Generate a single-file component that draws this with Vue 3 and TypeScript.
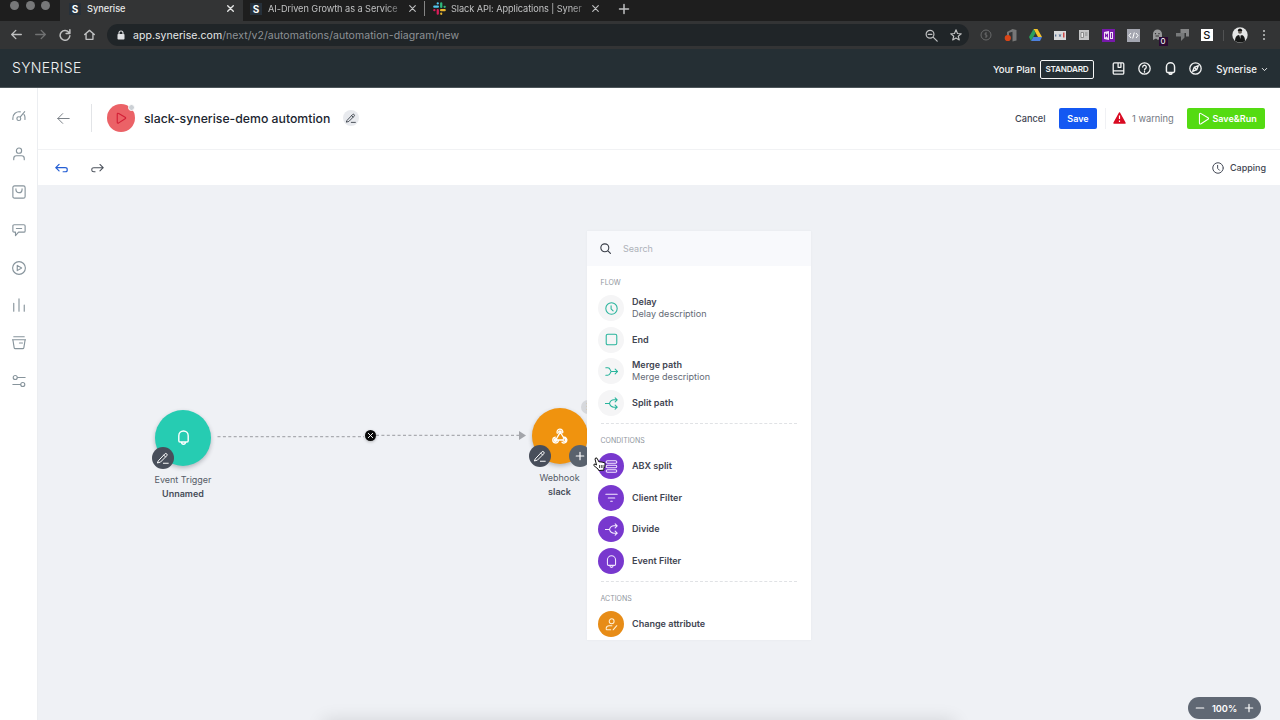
<script setup lang="ts">
import { h } from 'vue'

const paths: Record<string, string> = {
  back: 'M15 8H1M7 2L1 8l6 6',
  forward: 'M1 8h14M9 2l6 6-6 6',
  reload: 'M13.5 5A6.5 6.5 0 1 0 14.5 9M14.5 1v5h-5',
  home: 'M1 8l7-6 7 6M3 7v8h10V7',
  zoomOut: 'M11 6.5a4.8 4.8 0 1 1-9.6 0a4.8 4.8 0 1 1 9.6 0M10 10l5 5M4 6.5h4.5',
  star: 'M8 1l2 5 5 .4-4 3.3 1.4 5L8 12l-4.4 2.7 1.4-5-4-3.3L6 6z',
  search: 'M12.800 7a5.800 5.800 0 1 1-11.600 0a5.800 5.800 0 1 1 11.600 0M11.200 11.200l4 4',
  book: 'M3 1h10q1.500 0 1.500 1.500v11q0 1.500-1.500 1.500H3q-1.500 0-1.500-1.500v-11Q1.500 1 3 1M1.500 11h13M7.500 1v5.500H11V1',
  help: 'M15 8A7 7 0 1 1 1 8A7 7 0 1 1 15 8M5.8 6.2a2.2 2.2 0 1 1 3.4 1.9Q8 8.8 8 9.8M8 11.5v1',
  bell: 'M3 11.500V6a5 5 0 0 1 10 0v5.500q0 1.300-1.300 1.300H4.300Q3 12.800 3 11.500M6 13a2 2.200 0 0 0 4 0',
  compass: 'M15 8A7 7 0 1 1 1 8A7 7 0 1 1 15 8M11.5 4.5L9.5 9.5l-5 2 2-5zM6.5 6.5l3 3',
  chevron: 'M3 5.5l5 5 5-5',
  gauge: 'M1 12V10.5A7 7 0 0 1 9.5 3.3M14.8 12V9.5q0-2-1-3.2M10 11a2.2 2.2 0 1 1-4.4 0a2.2 2.2 0 1 1 4.4 0M9.3 9.3L14.5 3',
  user: 'M11 4.200a3 3 0 1 1-6 0a3 3 0 1 1 6 0M2 14.500V13q0-3 3-3h6q3 0 3 3v1.500',
  bag: 'M3 1h10q2 0 2 2v10q0 2-2 2H3q-2 0-2-2V3q0-2 2-2M4.5 4.5v.8a3.5 3.5 0 0 0 7 0v-.8',
  chat: 'M2.5 2h11q1.5 0 1.5 1.5V9q0 1.5-1.5 1.5H7.5L4 14.5v-4H2.5Q1 10.500 1 9V3.500Q1 2 2.500 2M5 6.300h6',
  playCircle: 'M15.300 8A7.300 7.300 0 1 1 .7 8A7.300 7.300 0 1 1 15.300 8M6 5l5 3-5 3z',
  bars: 'M2 6v9M8 1v14M14 8v7',
  basket: 'M2 .8h12M.5 4.300h15M1 4.300l1.500 9.200q.2 1 1.200 1h8.600q1 0 1.200-1L15 4.300M8.500 8H12',
  sliders: 'M6 4a2.300 2.300 0 1 1-4.600 0a2.300 2.300 0 1 1 4.600 0M6 4h9M14.600 12a2.300 2.300 0 1 1-4.600 0a2.300 2.300 0 1 1 4.600 0M10 12H1',
  pencil: 'M2 11.500L10.500 2.500q1.300-1.200 2.500 0t0 2.500L4.600 13.500 1 14.500zM9 4.200l2.300 2.300M8.500 15H15',
  undo: 'M5 3L1 7l4 4M1 7h11.500q2.500 0 2.500 2v1q0 2-2.500 2H10',
  redo: 'M11 3l4 4-4 4M15 7H3.500Q1 7 1 9v1q0 2 2.500 2H5',
  clock: 'M15 8A7 7 0 1 1 1 8A7 7 0 1 1 15 8M7.500 4.500v4L10 11',
  play: 'M3 3q0-2 2-1l8.500 5q1.500 1 0 2L5 14.500q-2 1-2-1z',
  square: 'M3.500 1.500h9q2 0 2 2v9q0 2-2 2h-9q-2 0-2-2v-9q0-2 2-2',
  merge: 'M1 3.500h2.500q2 0 3 2.500t2 2h7M1 12.500h2.500q2 0 3-2.500t2-2M12.500 5l3 3-3 3',
  split: 'M.5 8H5.500M15 3.500h-4Q7 3.500 5.500 8q1.500 4.500 5.500 4.500h4M12.500 1L15 3.500 12.500 6M12.500 10l2.500 2.500-2.500 2.500',
  abx: 'M3 1h10q1.500 0 1.500 1.500T13 4H3Q1.500 4 1.500 2.500T3 1M3 6.500h10q1.500 0 1.500 1.500T13 9.500H3Q1.500 9.500 1.500 8T3 6.500M3 12h10q1.500 0 1.500 1.500T13 15H3q-1.500 0-1.500-1.500T3 12',
  filter: 'M1 4h14M4 8.500h8M7 12.500h2',
  attribute: 'M11.200 4a3 3 0 1 1-6 0a3 3 0 1 1 6 0M7 14.500H3q-2 0-1.500-2 .5-3 3.500-3h3.500M10 14.500l4.500-5',
  webhook: 'M7.300 5.800L3.700 12M5.300 5.200a2.900 2.900 0 1 1 5.400-.4M8.200 4l3.600 6M9.300 4.100a1.300 1.300 0 1 1-2.600 0a1.300 1.300 0 1 1 2.600 0M5 12a1.300 1.300 0 1 1-2.600 0a1.300 1.300 0 1 1 2.600 0M5 12h6M13.600 12a1.300 1.300 0 1 1-2.600 0a1.300 1.300 0 1 1 2.600 0M3.300 9.200a2.900 2.900 0 1 0 3.200 3.600M10 14.200a2.900 2.900 0 1 0 1.800-5',
  minus: 'M2 8h12',
  plus: 'M2 8h12M8 2v12',
  close: 'M3 3l10 10M13 3L3 13',
}

const Icon = (props: { name: string; size?: number; weight?: number }) =>
  h(
    'svg',
    {
      class: 'icon',
      viewBox: '0 0 16 16',
      width: props.size ?? 14,
      height: props.size ?? 14,
      fill: 'none',
      stroke: 'currentColor',
      'stroke-width': props.weight ?? 1.3,
      'stroke-linecap': 'round',
      'stroke-linejoin': 'round',
    },
    [h('path', { d: paths[props.name] })],
  )
Icon.props = ['name', 'size', 'weight']

interface Item { label: string; icon: string; note?: string }
interface Section { title: string; tone: string; items: Item[] }

const sections: Section[] = [
  {
    title: 'FLOW',
    tone: 'flow',
    items: [
      { label: 'Delay', icon: 'clock', note: 'Delay description' },
      { label: 'End', icon: 'square' },
      { label: 'Merge path', icon: 'merge', note: 'Merge description' },
      { label: 'Split path', icon: 'split' },
    ],
  },
  {
    title: 'CONDITIONS',
    tone: 'conditions',
    items: [
      { label: 'ABX split', icon: 'abx' },
      { label: 'Client Filter', icon: 'filter' },
      { label: 'Divide', icon: 'split' },
      { label: 'Event Filter', icon: 'bell' },
    ],
  },
  { title: 'ACTIONS', tone: 'actions', items: [{ label: 'Change attribute', icon: 'attribute' }] },
]

const sideIcons = ['gauge', 'user', 'bag', 'chat', 'playCircle', 'bars', 'basket', 'sliders']
</script>

<template>
  <div class="screen">
    <div class="tabs">
      <div class="lights"><i></i><i></i><i></i></div>
      <div class="tab active">
        <span class="fav">S</span><span class="tab-title t1">Synerise</span>
        <Icon name="close" :size="9" :weight="2.4" />
      </div>
      <div class="tab second">
        <span class="fav dark">S</span><span class="tab-title t2 fade">AI-Driven Growth as a Service</span>
        <Icon name="close" :size="9" :weight="2" />
      </div>
      <div class="tab third">
        <svg class="slack" viewBox="0 0 12 12" width="13" height="13" fill="none" stroke-width="2.1" stroke-linecap="round">
          <path d="M1.200 4.300h3.300M4.400 1.200v.1" stroke="#52c5ee" />
          <path d="M7.600 1.200v3.300M10.700 4.400h.1" stroke="#2fb67c" />
          <path d="M7.500 7.600h3.300M7.600 10.800v.1" stroke="#e8b42e" />
          <path d="M4.400 7.500v3.300M1.200 7.600h.1" stroke="#d81c59" />
        </svg>
        <span class="tab-title t3 fade">Slack API: Applications | Syner</span>
        <Icon name="close" :size="9" :weight="2" />
      </div>
      <div class="new-tab"><Icon name="plus" :size="12" :weight="2" /></div>
    </div>

    <div class="toolbar">
      <div class="nav">
        <span><Icon name="back" :size="11" :weight="1.900" /></span>
        <span class="dim"><Icon name="forward" :size="11" :weight="1.900" /></span>
        <span><Icon name="reload" :size="12" :weight="2" /></span>
        <span><Icon name="home" :size="11" :weight="2" /></span>
      </div>
      <div class="url">
        <svg class="lock" viewBox="0 0 8 10" width="8" height="10">
          <rect x="0.500" y="4" width="7" height="5.500" rx="0.800" fill="#dfe1e3" />
          <path d="M2 4.500V3a2 2 0 0 1 4 0v1.500" fill="none" stroke="#dfe1e3" stroke-width="1.100" />
        </svg>
        <span class="address"><b>app.synerise.com</b>/next/v2/automations/automation-diagram/new</span>
        <span class="url-icon"><Icon name="zoomOut" :size="13" :weight="1.500" /></span>
        <span class="url-icon"><Icon name="star" :size="12" :weight="1.500" /></span>
      </div>
      <div class="exts">
        <span>
          <svg width="12" height="12" viewBox="0 0 12 12" fill="none" stroke="#68696a"><circle cx="6" cy="6" r="5" /><path d="M6 3v6M5.200 4v2M6.800 6v2" /></svg>
        </span>
        <span>
          <svg width="14" height="14" viewBox="0 0 14 14"><path d="M3 4l5.500-3L12.500 2v10.500L8.500 13.500V3.800L5 4.800V8H3z" fill="#777" /><circle cx="3.800" cy="10" r="3.100" fill="#da4517" /></svg>
        </span>
        <span>
          <svg width="13" height="12" viewBox="0 0 13 12"><path d="M4.500 0h4L13 8H9z" fill="#f5c32c" /><path d="M4.500 0L0 8l2 4 4.600-8z" fill="#2a9f5b" /><path d="M4.300 8H13l-2 4H2z" fill="#4d80dc" /></svg>
        </span>
        <span>
          <svg width="12" height="9" viewBox="0 0 12 9"><rect width="12" height="9" fill="#d9dadc" /><path d="M9 1.500h1.500v5H9z" fill="#cf4a48" /><path d="M1 3.500h1.300v2H1M4.500 3.500h3l-.8 1 .5 1.500-1.200-.7-1.200.7.500-1.500" fill="#567095" /></svg>
        </span>
        <span>
          <svg width="10" height="10" viewBox="0 0 10 10"><rect width="10" height="10" fill="#c4c5c6" /><path d="M2 2.500h2.500v5H2zM6 3h2.500M6 5h2.500" fill="#ececec" stroke="#77797a" stroke-width=".8" /></svg>
        </span>
        <span>
          <svg width="13" height="13" viewBox="0 0 13 13"><rect width="13" height="13" fill="#7719aa" /><path d="M2 3l5-1v9l-5-1zM8 3h3v7H8" fill="#efe2f5" /><path d="M3.500 8.300V4.700l2 3.600V4.700M9.500 4v5" fill="none" stroke="#7719aa" /></svg>
        </span>
        <span>
          <svg width="13" height="13" viewBox="0 0 13 13"><rect width="13" height="13" fill="#a4a6b0" /><path d="M4 4L2 6.500 4 9M9 4l2 2.500L9 9M7.300 3.500l-1.600 6" fill="none" stroke="#fff" /></svg>
        </span>
        <span class="ghost">
          <svg width="11" height="12" viewBox="0 0 11 12"><path d="M1 11V5a4.500 4.500 0 0 1 9 0v6L8 9.500 6 11 4 9.500z" fill="#98999a" /><path d="M3.500 4v1.200M7 4v1.200M3.500 7h3.500" stroke="#333" stroke-width="1.200" /></svg>
          <em>0</em>
        </span>
        <span>
          <svg width="13" height="12" viewBox="0 0 13 12"><path d="M4.500 0H13v7.500h-3V4H4.500z" fill="#858687" /><path d="M0 4h8.500v4.500L5 12V7.500H0z" fill="#77797a" /></svg>
        </span>
        <span><b class="s-ext">S</b></span>
      </div>
      <i class="bar"></i>
      <svg class="avatar" width="16" height="16" viewBox="0 0 16 16">
        <circle cx="8" cy="8" r="7.700" fill="#e4e5e5" />
        <path d="M3 14q0-5 3.500-6L8 9l2-1q3 1 3 6-4 3-10 0" fill="#151616" />
        <circle cx="8" cy="4.800" r="2" fill="#625b55" /><path d="M5.700 4q0-2.500 2.300-2.500T10.300 4z" fill="#111" /><path d="M7.500 9h1v3" fill="#ddd" />
      </svg>
      <div class="kebab"><i></i><i></i><i></i></div>
    </div>

    <header class="app-header">
      <span class="brand">SYNERISE</span>
      <span class="plan">Your Plan</span>
      <span class="badge">STANDARD</span>
      <div class="head-icons">
        <span><Icon name="book" :size="13" :weight="1.600" /></span>
        <span><Icon name="help" :size="13" :weight="1.600" /></span>
        <span><Icon name="bell" :size="13" :weight="1.800" /></span>
        <span><Icon name="compass" :size="13" :weight="1.600" /></span>
      </div>
      <span class="account">Synerise</span>
      <Icon name="chevron" :size="7" :weight="2.200" />
    </header>

    <div class="body">
      <aside class="side">
        <span v-for="name in sideIcons" :key="name"><Icon :name="name" :size="14" :weight="1.300" /></span>
      </aside>
      <main class="main">
        <div class="title-bar">
          <span class="go-back"><Icon name="back" :size="13" :weight="1.200" /></span>
          <div class="campaign"><Icon name="play" :size="12" :weight="1.500" /><i></i></div>
          <span class="title">slack-synerise-demo automtion</span>
          <span class="rename"><Icon name="pencil" :size="10" :weight="1.400" /></span>
          <span class="cancel">Cancel</span>
          <button class="save"><span>Save</span></button>
          <div class="warn">
            <svg width="13" height="12" viewBox="0 0 13 12"><path d="M6.500 1L12 11H1z" fill="#d90b22" stroke="#d90b22" stroke-width="1.500" stroke-linejoin="round" /><path d="M6.500 3.500V7M6.500 8.600v1.300" stroke="#fff" stroke-width="1.200" /></svg>
            <span>1 warning</span>
          </div>
          <button class="run"><Icon name="play" :size="13" :weight="1.300" /><span>Save&amp;Run</span></button>
        </div>
        <div class="sub-bar">
          <span class="undo"><Icon name="undo" :size="13" :weight="1.500" /></span>
          <span class="redo"><Icon name="redo" :size="13" :weight="1.300" /></span>
          <div class="capping"><Icon name="clock" :size="12" :weight="1.300" /><span>Capping</span></div>
        </div>

        <div class="canvas">
          <svg class="edges" width="600" height="500" viewBox="0 0 600 500" fill="none">
            <path d="M179.500 251.700H326" stroke="#aaacb1" stroke-width="1.300" stroke-dasharray="3 2.400" />
            <path d="M338 250.400H481" stroke="#aaacb1" stroke-width="1.300" stroke-dasharray="3 2.400" />
            <path d="M481 246l7 4.500-7 4.500z" fill="#a3a5aa" />
          </svg>
          <span class="cut"><Icon name="close" :size="7" :weight="2.200" /></span>

          <div class="node trigger">
            <div class="disc"><Icon name="bell" :size="15" :weight="1.500" /></div>
            <span class="chip edit"><Icon name="pencil" :size="12" :weight="1.300" /></span>
            <p>Event Trigger</p>
            <strong>Unnamed</strong>
          </div>
          <div class="node webhook">
            <span class="more">⋮</span>
            <div class="disc"><Icon name="webhook" :size="16" :weight="1.300" /></div>
            <span class="chip edit"><Icon name="pencil" :size="12" :weight="1.300" /></span>
            <span class="chip add"><Icon name="plus" :size="10" :weight="1.900" /></span>
            <p>Webhook</p>
            <strong>slack</strong>
          </div>

          <div class="picker">
            <div class="search"><Icon name="search" :size="11" :weight="1.600" /><span>Search</span></div>
            <section v-for="s in sections" :key="s.title" :class="s.tone">
              <h4>{{ s.title }}</h4>
              <div v-for="item in s.items" :key="item.label" class="item">
                <span class="dot"><Icon :name="item.icon" :size="13" :weight="1.300" /></span>
                <div class="label"><b>{{ item.label }}</b><small v-if="item.note">{{ item.note }}</small></div>
              </div>
            </section>
          </div>

          <svg class="cursor" width="13" height="14" viewBox="0 0 13 14">
            <path d="M3.500 8L2 2Q2.500.2 4 1.200L6 5l1-.4 1 .6 1-.4 1 .8 1.300-.2.800 1.500-.4 3-.9 1.500.2 1.700-5.200.5L5 12 .8 8.500Q.5 7 2 7z" fill="#fff" stroke="#111" stroke-width="1" />
            <path d="M6.500 8v3M8.300 8v3M10 8v3" stroke="#222" stroke-width=".8" />
          </svg>

          <div class="dock-shade"></div>
          <div class="zoom"><Icon name="minus" :size="10" :weight="1.900" /><span>100%</span><Icon name="plus" :size="10" :weight="1.900" /></div>
        </div>
      </main>
    </div>
  </div>
</template>

<style>
body { margin: 0; overflow: hidden; }
</style>

<style scoped>
* { box-sizing: border-box; }
.screen { width: 1280px; height: 720px; display: flex; flex-direction: column; overflow: hidden; background: #fff; font-family: Inter, "Liberation Sans", sans-serif; color: #3f4552; font-size: 10px; white-space: nowrap; }
.icon { display: block; flex: none; }
button { border: 0; padding: 0; font: inherit; }

.tabs { height: 21px; background: #1e1e1e; display: flex; flex: none; color: #c0c1c2; }
.lights { width: 60px; display: flex; gap: 6.500px; padding: 1px 0 0 10px; }
.lights i { width: 9px; height: 9px; border-radius: 50%; background: #777879; flex: none; }
.tab { display: flex; align-items: center; height: 21px; padding-bottom: 4px; }
.active { width: 183px; background: #333435; padding-left: 9px; color: #e6e7e7; }
.second { width: 183px; padding-left: 7px; }
.second::after { content: ""; width: 1px; height: 15px; background: #858585; margin-left: 7px; }
.third { width: 186px; padding-left: 7px; }
.fav { width: 12px; height: 12px; background: #26303a; color: #fff; font-size: 10px; font-weight: 700; line-height: 12px; text-align: center; flex: none; }
.tab-title { font-size: 9.200px; margin-left: 6px; line-height: 14px; flex: none; }
.t1 { width: 138.500px; color: #e8e9e9; font-weight: 500; }
.t2 { width: 133px; letter-spacing: -.05px; }
.t3 { width: 136px; margin-left: 5px; letter-spacing: -.08px; }
.tab .icon { margin-left: 7px; }
.active .icon { margin-left: 0; }
.third .icon { margin-left: 4px; }
.fade { -webkit-mask-image: linear-gradient(90deg, #000 88%, rgba(0, 0, 0, .3)); mask-image: linear-gradient(90deg, #000 88%, rgba(0, 0, 0, .3)); }
.new-tab { padding: 3px 0 0 6px; }

.toolbar { height: 28px; background: #333435; display: flex; align-items: center; flex: none; color: #bfc0c1; }
.nav { display: flex; width: 107px; padding-left: 4px; }
.nav span { width: 24.500px; display: flex; justify-content: center; }
.nav .dim { color: #717273; }
.url { width: 862px; height: 22px; border-radius: 11px; background: #202528; display: flex; align-items: center; padding: 0 1px 0 10px; }
.address { font-size: 10.500px; margin-left: 8px; flex: 1; color: #8e9296; letter-spacing: .05px; }
.address b { font-weight: 400; color: #e8eaea; }
.url-icon { width: 24.500px; display: flex; justify-content: center; }
.exts { display: flex; width: 245px; margin-left: 5px; }
.exts span { width: 24.500px; height: 16px; display: flex; align-items: center; justify-content: center; }
.exts .ghost { position: relative; }
.ghost em { position: absolute; left: 13px; top: 10px; width: 9px; height: 9px; background: #2b0a33; color: #fff; font: 8px/9px Inter, sans-serif; text-align: center; }
.s-ext { width: 12px; height: 12px; background: #fff; color: #111; font-size: 11px; line-height: 12px; font-weight: 500; text-align: center; }
.bar { width: 1px; height: 11px; background: #515253; margin: 0 8px 0 4px; }
.kebab { display: flex; flex-direction: column; gap: 2px; margin-left: 15px; }
.kebab i { width: 2px; height: 2px; border-radius: 50%; background: #c5c6c6; }

.app-header { height: 39px; background: #252f34; border-bottom: 1px solid #4d565a; display: flex; align-items: center; flex: none; color: #f2f3f3; padding: 2px 13px 0 12px; }
.brand { font-size: 14px; font-weight: 300; letter-spacing: .35px; width: 981px; line-height: 14px; margin-top: -2px; flex: none; }
.plan { width: 47px; font-size: 9.600px; font-weight: 500; flex: none; letter-spacing: -.1px; }
.badge { width: 54px; height: 19px; border: 1.500px solid #f4f5f5; border-radius: 2px; font-size: 8.200px; font-weight: 600; text-align: center; line-height: 16.500px; flex: none; letter-spacing: -.25px; }
.head-icons { display: flex; margin-left: 12px; margin-top: -2px; }
.head-icons span { width: 25.700px; display: flex; justify-content: center; }
.account { font-size: 9.700px; font-weight: 500; margin-left: 7.500px; width: 45px; flex: none; padding-top: 1px; }

.body { flex: 1; display: flex; min-height: 0; }
.side { width: 38px; border-right: 1px solid #eceef1; display: flex; flex-direction: column; padding-top: 9.500px; color: #87949c; flex: none; }
.side span { height: 37.800px; display: flex; align-items: center; justify-content: center; flex: none; }
.main { flex: 1; display: flex; flex-direction: column; min-width: 0; }
.title-bar { height: 62px; border-bottom: 1px solid #f1f2f4; display: flex; align-items: center; padding: 0 15px 1px 0; flex: none; }
.go-back { width: 54px; height: 28px; border-right: 1px solid #e2e4e7; display: flex; align-items: center; padding-left: 19px; color: #777d85; }
.campaign { width: 28px; height: 28px; border-radius: 50%; margin-left: 14.500px; background: #eb6267; color: #d31f36; display: flex; align-items: center; justify-content: center; position: relative; }
.campaign i { position: absolute; right: 0; top: 0; width: 7px; height: 7px; border-radius: 50%; background: #ccd0d5; border: 1.500px solid #fff; }
.title { font-size: 12.250px; font-weight: 500; color: #1b2530; margin-left: 9.500px; width: 199px; flex: none; }
.rename { width: 16px; height: 16px; border-radius: 50%; background: #e8eaee; display: flex; align-items: center; justify-content: center; color: #353b45; }
.cancel { margin-left: auto; font-weight: 500; font-size: 9.200px; width: 44px; }
.save { width: 38px; height: 21px; border-radius: 2px; background: #1458f2; color: #fff; font-size: 9px; font-weight: 600; }
.warn { margin-left: 8px; height: 21px; border-left: 1px solid #f0f1f4; padding-left: 7px; display: flex; align-items: center; width: 82px; color: #747982; font-size: 9.300px; }
.warn span { margin-left: 6px; }
.run { width: 78px; height: 21px; border-radius: 2px; background: #54db12; color: #fff; font-size: 9px; font-weight: 600; display: flex; align-items: center; padding-left: 10px; gap: 2.500px; }
.sub-bar { height: 35px; flex: none; display: flex; align-items: center; padding: 0 14px 0 17px; }
.undo { color: #245ed4; width: 36px; padding-top: 1px; }
.redo { color: #4b515b; padding-top: 1px; }
.capping { margin-left: auto; display: flex; align-items: center; gap: 6px; font-size: 9px; font-weight: 500; width: 54px; }
.capping .icon { margin-top: 1px; }

.canvas { flex: 1; position: relative; overflow: hidden; background: #eff1f5; }
.edges { position: absolute; left: 0; top: 0; }
.cut { position: absolute; left: 326.500px; top: 244.500px; width: 11px; height: 11px; border-radius: 50%; background: #090909; color: #fff; display: flex; align-items: center; justify-content: center; box-shadow: 0 1px 3px rgba(0, 0, 0, .25); }
.node { position: absolute; width: 110px; display: flex; flex-direction: column; align-items: center; }
.trigger { left: 90px; top: 224.500px; }
.webhook { left: 466.500px; top: 223px; }
.disc { width: 56px; height: 56px; border-radius: 50%; display: flex; align-items: center; justify-content: center; color: #fff; box-shadow: 0 2px 4px rgba(40, 45, 60, .3); position: relative; }
.trigger .disc { background: #26ccb2; }
.webhook .disc { background: #f0930e; }
.chip { position: absolute; width: 22px; height: 22px; border-radius: 50%; background: #484e5a; color: #fff; display: flex; align-items: center; justify-content: center; }
.edit { left: 24px; top: 37px; }
.add { left: 64.500px; top: 37px; background: #59626d; }
.more { position: absolute; left: 76px; top: -8px; width: 14px; height: 14px; border-radius: 50%; background: #d6d8dc; color: #7b8088; font-size: 9px; line-height: 14px; text-align: center; }
.node p { margin: 7px 0 0; font-size: 9px; line-height: 14px; color: #555c67; }
.node strong { font-size: 9px; line-height: 13px; font-weight: 600; color: #474d59; }

.picker { position: absolute; left: 549px; top: 46px; width: 224px; height: 409px; background: #fff; overflow: hidden; box-shadow: 0 0 2px rgba(70, 80, 110, .06); }
.search { height: 35px; background: #f8f9fc; display: flex; align-items: center; padding-left: 13px; color: #383d47; }
.search span { margin-left: 12px; font-size: 9px; color: #aeb2b9; }
section { height: 158px; padding-left: 11px; }
section:not(:last-child)::after { content: ""; display: block; margin: 4px 14px 0 2.500px; border-top: 1px dashed #e0e2e5; }
h4 { margin: 0; height: 26.500px; padding: 9.500px 0 0 2.500px; font-weight: 400; font-size: 7px; line-height: 14px; color: #91969e; }
.item { height: 31.600px; display: flex; align-items: center; }
.dot { width: 26px; height: 26px; border-radius: 50%; background: #f5f5f6; color: #28b49c; display: flex; align-items: center; justify-content: center; flex: none; }
.conditions .dot { background: #7838ce; color: #f3e9ff; }
.actions .dot { background: #e78c17; color: #fff1d6; }
.label { margin-left: 8px; display: flex; flex-direction: column; font-size: 9.050px; line-height: 12.500px; }
.label b { font-weight: 600; color: #3f4552; }
.label small { font-size: 9.050px; color: #646a75; }
.cursor { position: absolute; left: 555px; top: 272px; }
.dock-shade { position: absolute; left: 285px; bottom: -20px; width: 632px; height: 20px; box-shadow: 0 0 18px rgba(0, 0, 0, .12); }
.zoom { position: absolute; right: 19px; bottom: 1px; width: 73px; height: 22px; border-radius: 11px; background: #606874; color: #fff; display: flex; align-items: center; justify-content: space-between; padding: 0 6.500px; font-size: 9.200px; font-weight: 600; }
</style>
